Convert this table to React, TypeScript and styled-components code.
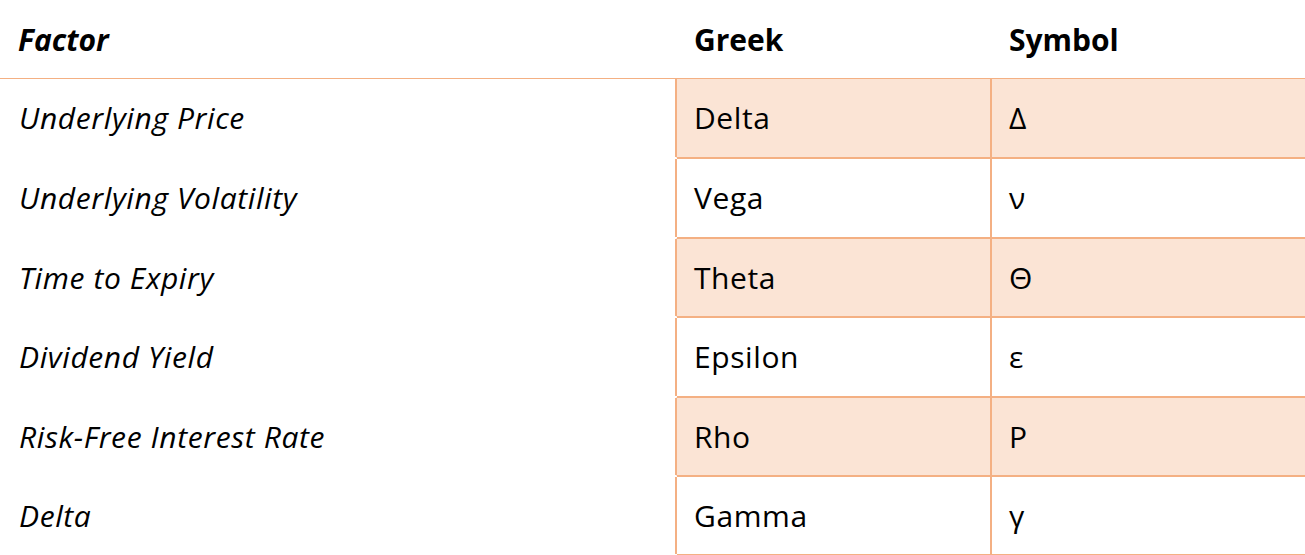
import React from "react";
import styled, { createGlobalStyle } from "styled-components";

const GlobalStyle = createGlobalStyle`
  html, body {
    margin: 0;
    padding: 0;
    background: #ffffff;
  }
  body {
    font-family: "Open Sans", "Lato", sans-serif;
    color: #000000;
    overflow: hidden;
  }
`;

interface Row {
  factor: string;
  greek: string;
  symbol: string;
}

const rows: Row[] = [
  { factor: "Underlying Price", greek: "Delta", symbol: "Δ" },
  { factor: "Underlying Volatility", greek: "Vega", symbol: "ν" },
  { factor: "Time to Expiry", greek: "Theta", symbol: "Θ" },
  { factor: "Dividend Yield", greek: "Epsilon", symbol: "ε" },
  { factor: "Risk-Free Interest Rate", greek: "Rho", symbol: "Ρ" },
  { factor: "Delta", greek: "Gamma", symbol: "γ" },
];

const columnWidths = [676, 315, 314];

// rows are 79.4px apart; snap each to whole pixels so lines stay crisp
const ROW_PITCH = 79.4;
const rowHeight = (i: number) =>
  Math.round((i + 1) * ROW_PITCH) - Math.round(i * ROW_PITCH);

const Table = styled.table`
  width: 1305px;
  border-collapse: collapse;
  table-layout: fixed;
  font-size: 30px;
  letter-spacing: 0.6px;
`;

const Col = styled.col<{ $width: number }>`
  width: ${(p) => p.$width}px;
`;

const BodyRow = styled.tr<{ $height: number }>`
  height: ${(p) => p.$height}px;
`;

const HeadCell = styled.th<{ $italic?: boolean }>`
  height: 78px;
  padding: 0 0 0 18px;
  text-align: left;
  font-weight: 700;
  letter-spacing: 0;
  font-style: ${(p) => (p.$italic ? "italic" : "normal")};
  border-bottom: 1px solid #f4b083;
  vertical-align: middle;
`;

const FactorCell = styled.td`
  padding: 0 0 0 19px;
  font-style: italic;
  border-bottom: 2px solid transparent;
`;

const DataCell = styled.td<{ $shaded: boolean }>`
  padding: 0 0 0 17px;
  background: ${(p) => (p.$shaded ? "#fbe4d5" : "#ffffff")};
  border-left: 2px solid #f4b083;
  border-bottom: 2px solid #f4b083;
`;

export default function App() {
  return (
    <>
      <GlobalStyle />
      <Table>
        <colgroup>
          {columnWidths.map((w, i) => (
            <Col key={i} $width={w} />
          ))}
        </colgroup>
        <thead>
          <tr>
            <HeadCell $italic>Factor</HeadCell>
            <HeadCell>Greek</HeadCell>
            <HeadCell>Symbol</HeadCell>
          </tr>
        </thead>
        <tbody>
          {rows.map((r, i) => (
            <BodyRow key={r.greek} $height={rowHeight(i)}>
              <FactorCell>{r.factor}</FactorCell>
              <DataCell $shaded={i % 2 === 0}>{r.greek}</DataCell>
              <DataCell $shaded={i % 2 === 0}>{r.symbol}</DataCell>
            </BodyRow>
          ))}
        </tbody>
      </Table>
    </>
  );
}
